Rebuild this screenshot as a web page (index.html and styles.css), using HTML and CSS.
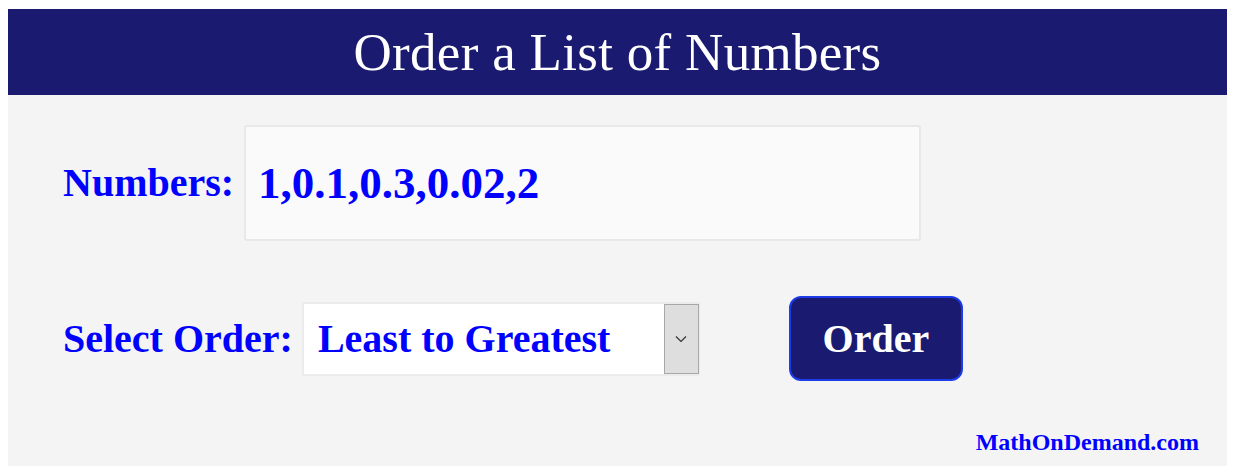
FILE: index.html
```html
<!DOCTYPE html>
<html lang="en">
<head>
<meta charset="utf-8">
<title>Order a List of Numbers</title>
<link rel="stylesheet" href="styles.css">
</head>
<body>
<div class="app">
  <header class="header">
    <h1 class="title">Order a List of Numbers</h1>
  </header>
  <main class="panel">
    <div class="row row-numbers">
      <label class="label" for="nums">Numbers:</label>
      <input class="num-input" id="nums" type="text" value="1,0.1,0.3,0.02,2">
    </div>
    <div class="row row-order">
      <label class="label" for="ord">Select Order:</label>
      <div class="select-wrap">
        <select class="select" id="ord">
          <option>Least to Greatest</option>
          <option>Greatest to Least</option>
        </select>
        <span class="select-arrow">
          <svg width="12" height="8" viewBox="0 0 12 8"><path d="M1 1.5 L6 6.5 L11 1.5" fill="none" stroke="#333" stroke-width="1.2"/></svg>
        </span>
      </div>
      <button class="btn" type="button">Order</button>
    </div>
    <div class="footer">MathOnDemand.com</div>
  </main>
</div>
</body>
</html>
```
FILE: styles.css
```css
html, body {
  margin: 0;
  padding: 0;
  background: #ffffff;
}
body {
  padding: 9px 8px 8px 8px;
  font-family: "Liberation Serif", "Times New Roman", serif;
}
.app {
  display: flex;
  flex-direction: column;
}
.header {
  height: 86px;
  background: #1a1a70;
  display: flex;
  align-items: center;
  justify-content: center;
}
.title {
  margin: 0;
  color: #ffffff;
  font-weight: normal;
  font-size: 53px;
  line-height: 1;
  letter-spacing: 0.3px;
}
.panel {
  background: #f4f4f4;
  padding: 30px 28px 10px 55px;
  display: flex;
  flex-direction: column;
}
.row {
  display: flex;
  align-items: center;
}
.label {
  color: #0000ff;
  font-weight: bold;
  font-size: 40px;
  line-height: 1;
}
.row-numbers .label {
  margin-right: 10px;
}
.num-input {
  box-sizing: border-box;
  width: 677px;
  height: 116px;
  border: 2px solid #e8e8e8;
  border-radius: 3px;
  background: #fafafa;
  padding: 0 12px;
  color: #0000ff;
  font-family: "Liberation Serif", "Times New Roman", serif;
  font-weight: bold;
  font-size: 45px;
  outline: none;
}
.row-order {
  margin-top: 55px;
}
.row-order .label {
  margin-right: 9px;
}
.select-wrap {
  box-sizing: border-box;
  width: 398px;
  height: 74px;
  border: 2px solid #ebebeb;
  border-radius: 2px;
  background: #ffffff;
  display: flex;
  align-items: stretch;
}
.select {
  appearance: none;
  -webkit-appearance: none;
  flex: 1;
  min-width: 0;
  border: none;
  background: transparent;
  padding: 0 0 0 14px;
  color: #0000ff;
  font-family: "Liberation Serif", "Times New Roman", serif;
  font-weight: bold;
  font-size: 40px;
  outline: none;
}
.select-arrow {
  box-sizing: border-box;
  width: 35px;
  margin-right: -1px;
  background: #dedede;
  border: 1px solid #a8a8a8;
  display: flex;
  align-items: center;
  justify-content: center;
}
.btn {
  box-sizing: border-box;
  margin-left: 89px;
  width: 174px;
  height: 85px;
  background: #1a1a70;
  border: 2px solid #1b3ce6;
  border-radius: 12px;
  color: #ffffff;
  font-family: "Liberation Serif", "Times New Roman", serif;
  font-weight: bold;
  font-size: 40px;
  padding: 0;
  cursor: pointer;
}
.footer {
  align-self: flex-end;
  margin-top: 47px;
  color: #0000ff;
  font-weight: bold;
  font-size: 24px;
  line-height: 28px;
}
```
